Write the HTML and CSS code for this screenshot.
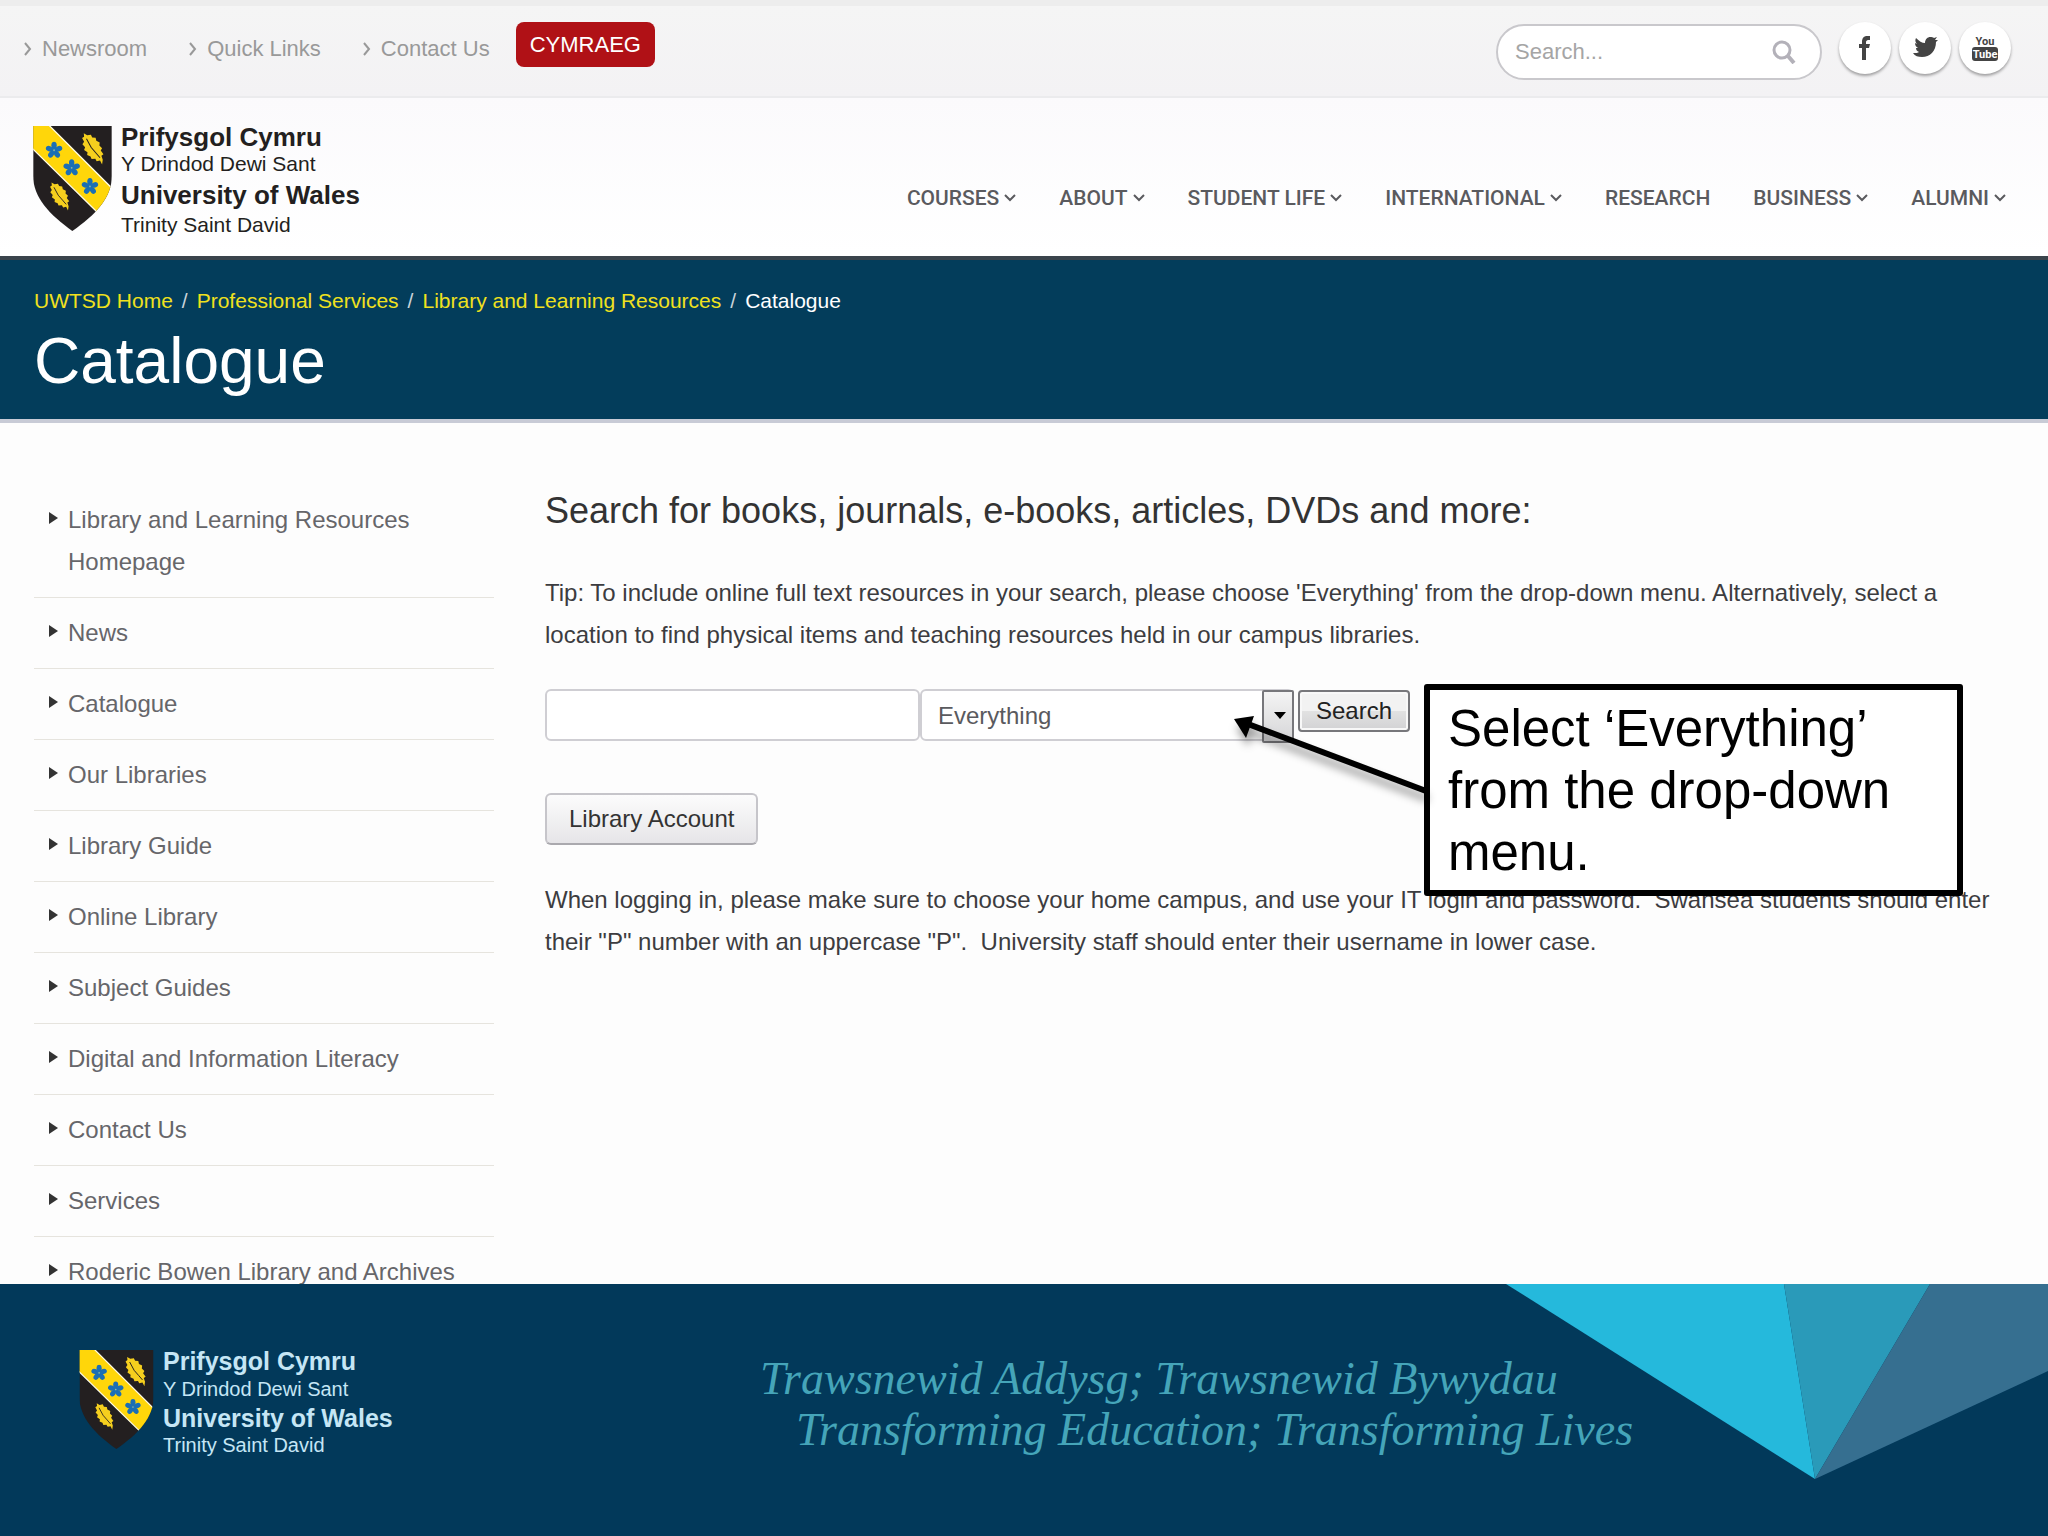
FILE: index.html
```html
<!DOCTYPE html>
<html lang="en">
<head>
    <meta charset="UTF-8">
    <meta name="viewport" content="width=device-width, initial-scale=1.0">
    <title>Catalogue | University of Wales Trinity Saint David</title>
    <link rel="stylesheet" href="styles.css">
</head>
<body>
    <!-- Shared symbols -->
    <svg class="symbols" aria-hidden="true">
        <symbol id="flower" viewBox="-20 -20 40 40">
            <g fill="#1b6fb5">
                <ellipse cx="0" cy="-11" rx="6" ry="8"/>
                <ellipse cx="0" cy="-11" rx="6" ry="8" transform="rotate(72)"/>
                <ellipse cx="0" cy="-11" rx="6" ry="8" transform="rotate(144)"/>
                <ellipse cx="0" cy="-11" rx="6" ry="8" transform="rotate(216)"/>
                <ellipse cx="0" cy="-11" rx="6" ry="8" transform="rotate(288)"/>
                <circle r="6"/>
            </g>
            <circle r="2" fill="#8fb8a0"/>
        </symbol>
        <symbol id="leaf" viewBox="0 0 70 96">
            <path fill="#f5cf1e" d="M6 2L16 8L27 6L31 14L41 15L43 24L53 29L52 38L60 46L56 53L64 64L58 68L62 80L60 94L54 82L44 84L40 77L29 78L26 70L16 66L17 58L7 51L10 43L2 34L7 27L1 16L7 12Z"/>
            <path fill="none" stroke="#231f20" stroke-width="3" d="M14 18L28 44L42 60L54 74"/>
        </symbol>
        <symbol id="shield" viewBox="0 0 237 316">
            <clipPath id="shield-clip">
                <path d="M0 0H237V150C237 215 188 268 118 316C50 268 0 215 0 150Z"/>
            </clipPath>
            <g clip-path="url(#shield-clip)">
                <path fill="#231f20" d="M0 0H237V316H0Z"/>
                <path fill="#ffd60a" stroke="#fffbe0" stroke-width="4" d="M-60 -60L-10 -60L250 200L200 266L-60 11Z"/>
                <use href="#flower" x="36" y="46" width="54" height="54"/>
                <use href="#flower" x="89" y="99" width="54" height="54"/>
                <use href="#flower" x="144" y="155" width="54" height="54"/>
                <use href="#leaf" x="146" y="20" width="72" height="98"/>
                <use href="#leaf" x="44" y="168" width="76" height="88"/>
            </g>
        </symbol>
        <symbol id="chevron-right" viewBox="0 0 8 14">
            <path fill="none" stroke="currentColor" stroke-width="2" d="M1 1L6 7L1 13"/>
        </symbol>
        <symbol id="chevron-down" viewBox="0 0 12 8">
            <path fill="none" stroke="currentColor" stroke-width="2" d="M1 1L6 6L11 1"/>
        </symbol>
    </svg>

    <div class="topbar">
        <ul class="quick-links">
            <li><a href="#"><svg class="icon-right"><use href="#chevron-right"/></svg>Newsroom</a></li>
            <li><a href="#"><svg class="icon-right"><use href="#chevron-right"/></svg>Quick Links</a></li>
            <li><a href="#"><svg class="icon-right"><use href="#chevron-right"/></svg>Contact Us</a></li>
        </ul>
        <a class="language" href="#">CYMRAEG</a>
        <form class="site-search">
            <input type="text" placeholder="Search..." aria-label="Search the site">
            <button type="button" aria-label="Search">
                <svg viewBox="0 0 24 24" width="24" height="24">
                    <circle cx="10" cy="10" r="8" fill="none" stroke="#b3b1b9" stroke-width="3"/>
                    <path stroke="#b3b1b9" stroke-width="4" d="M16 16L22 23"/>
                </svg>
            </button>
        </form>
        <ul class="social">
            <li><a href="#" aria-label="Facebook">
                <svg viewBox="0 0 28 28" width="28" height="28"><path fill="#444" d="M11 26V14H8V10H11V8C11 4 13 2 16 2H19V6H17C16 6 15 7 15 8V10H19L18 14H15V26Z"/></svg>
            </a></li>
            <li><a href="#" aria-label="Twitter">
                <svg viewBox="0 0 28 28" width="28" height="28"><path fill="#444" d="M2 19C5 19 7 19 8 18C6 17 5 16 5 14H7C5 13 4 11 4 9L6 10C4 8 4 6 5 4C8 7 11 9 14 9C14 5 17 3 19 3C21 3 22 3 23 4L26 3L24 6L27 6L25 8C25 17 19 23 11 23C7 23 4 22 2 19Z"/></svg>
            </a></li>
            <li><a href="#" aria-label="YouTube">
                <svg viewBox="0 0 28 28" width="28" height="28">
                    <rect x="1" y="13" width="26" height="14" rx="3" fill="#444"/>
                    <text class="yt" x="14" y="11" fill="#444">You</text>
                    <text class="yt" x="14" y="24" fill="#fff">Tube</text>
                </svg>
            </a></li>
        </ul>
    </div>

    <header>
        <a class="logo" href="#">
            <svg class="crest"><use href="#shield"/></svg>
            <span class="logo-text">
                <strong>Prifysgol Cymru</strong>
                <span>Y Drindod Dewi Sant</span>
                <strong>University of Wales</strong>
                <span>Trinity Saint David</span>
            </span>
        </a>
        <nav>
            <ul>
                <li><a href="#">COURSES<svg class="icon-down"><use href="#chevron-down"/></svg></a></li>
                <li><a href="#">ABOUT<svg class="icon-down"><use href="#chevron-down"/></svg></a></li>
                <li><a href="#">STUDENT LIFE<svg class="icon-down"><use href="#chevron-down"/></svg></a></li>
                <li><a href="#">INTERNATIONAL<svg class="icon-down"><use href="#chevron-down"/></svg></a></li>
                <li><a href="#">RESEARCH</a></li>
                <li><a href="#">BUSINESS<svg class="icon-down"><use href="#chevron-down"/></svg></a></li>
                <li><a href="#">ALUMNI<svg class="icon-down"><use href="#chevron-down"/></svg></a></li>
            </ul>
        </nav>
    </header>

    <div class="banner">
        <ol class="breadcrumb">
            <li><a href="#">UWTSD Home</a></li>
            <li><a href="#">Professional Services</a></li>
            <li><a href="#">Library and Learning Resources</a></li>
            <li>Catalogue</li>
        </ol>
        <h1>Catalogue</h1>
    </div>

    <main>
        <aside>
            <ul class="side-menu">
                <li><a href="#">Library and Learning Resources Homepage</a></li>
                <li><a href="#">News</a></li>
                <li><a href="#">Catalogue</a></li>
                <li><a href="#">Our Libraries</a></li>
                <li><a href="#">Library Guide</a></li>
                <li><a href="#">Online Library</a></li>
                <li><a href="#">Subject Guides</a></li>
                <li><a href="#">Digital and Information Literacy</a></li>
                <li><a href="#">Contact Us</a></li>
                <li><a href="#">Services</a></li>
                <li><a href="#">Roderic Bowen Library and Archives</a></li>
            </ul>
        </aside>
        <section class="content">
            <h2>Search for books, journals, e-books, articles, DVDs and more:</h2>
            <p>Tip: To include online full text resources in your search, please choose 'Everything' from the drop-down menu. Alternatively, select a location to find physical items and teaching resources held in our campus libraries.</p>
            <form class="catalogue-search">
                <input class="query" type="text" aria-label="Search terms">
                <div class="scope">
                    <select aria-label="Search in">
                        <option>Everything</option>
                    </select>
                </div>
                <button class="submit" type="button">Search</button>
                <!-- Help note pointing at the drop-down -->
                <div class="callout">
                    <svg class="pointer" viewBox="0 0 200 90" aria-hidden="true">
                        <path stroke="#000" stroke-width="6" d="M20 17L198 84"/>
                        <path d="M6 12L26 9L18 31Z"/>
                    </svg>
                    Select ‘Everything’ from the drop-down menu.
                </div>
            </form>
            <button class="account" type="button">Library Account</button>
            <p>When logging in, please make sure to choose your home campus, and use your IT login and password.&nbsp; Swansea students should enter their "P" number with an uppercase "P".&nbsp; University staff should enter their username in lower case.</p>
        </section>
    </main>

    <footer>
        <a class="logo" href="#">
            <svg class="crest"><use href="#shield"/></svg>
            <span class="logo-text">
                <strong>Prifysgol Cymru</strong>
                <span>Y Drindod Dewi Sant</span>
                <strong>University of Wales</strong>
                <span>Trinity Saint David</span>
            </span>
        </a>
        <p class="motto">
            <span>Trawsnewid Addysg; Trawsnewid Bywydau</span>
            <span>Transforming Education; Transforming Lives</span>
        </p>
        <svg class="facets" viewBox="0 0 542 196" aria-hidden="true">
            <path fill="#25b9dc" d="M0 0H278L309 195Z"/>
            <path fill="#2a9ab9" d="M278 0H424L309 195Z"/>
            <path fill="#366f90" d="M424 0H542V87L309 195Z"/>
        </svg>
    </footer>
</body>
</html>
```
FILE: styles.css
```css
* {
    box-sizing: border-box;
}
body {
    font-family: "Liberation Sans", Arial, sans-serif;
    font-size: 24px;
    line-height: 42px;
    color: #3c3c40;
    margin: 0;
    height: 100vh;
    display: flex;
    flex-direction: column;
    background-color: #fdfdfd;
}
ul, ol {
    list-style-type: none;
    margin: 0;
    padding: 0;
}
a {
    text-decoration: none;
}
input, select, button {
    font-family: inherit;
    font-size: 24px;
}
.symbols {
    position: absolute;
    width: 0;
    height: 0;
}

/* Top bar */
.topbar {
    display: flex;
    align-items: flex-start;
    padding: 16px 37px 16px 24px;
    border-top: 6px solid #ededed;
    border-bottom: 2px solid #ebebed;
    background: linear-gradient(#f5f5f5, #f3f2f4);
    font-size: 22px;
}
.quick-links {
    display: flex;
    gap: 42px;
    padding-top: 6px;
}
.quick-links a {
    display: flex;
    align-items: center;
    gap: 10px;
    color: #999;
}
.icon-right {
    width: 8px;
    height: 14px;
}
.language {
    margin-left: 26px;
    padding: 0 14px;
    line-height: 45px;
    border-radius: 8px;
    background-color: #b01116;
    color: #fff;
}
.site-search {
    display: flex;
    align-items: center;
    width: 326px;
    height: 56px;
    margin: 2px 17px 0 auto;
    padding: 0 24px 0 17px;
    border: 2px solid #c9c8cc;
    border-radius: 28px;
    background-color: #fff;
}
.site-search input {
    flex: 1;
    min-width: 0;
    padding: 0;
    border: 0;
    outline: 0;
    background: none;
    font-size: 22px;
}
.site-search input::placeholder {
    color: #a5a5a5;
}
.site-search button {
    display: flex;
    padding: 0;
    border: 0;
    background: none;
}
.social {
    display: flex;
    gap: 8px;
}
.social a {
    display: flex;
    align-items: center;
    justify-content: center;
    width: 52px;
    height: 52px;
    border-radius: 50%;
    background-color: #fff;
    box-shadow: 0 2px 3px rgba(0, 0, 0, 0.35);
}
.yt {
    font-family: Roboto, sans-serif;
    font-size: 11px;
    font-weight: bold;
    text-anchor: middle;
}

/* Header */
header {
    display: flex;
    justify-content: space-between;
    align-items: flex-start;
    padding: 24px 42px 19px 33px;
    border-bottom: 4px solid #3a444c;
    background: linear-gradient(#fbfafc, #fff);
}
.logo {
    display: flex;
    gap: 9px;
    color: #231f20;
}
.crest {
    width: 79px;
    height: 105px;
    margin-top: 4px;
}
.logo-text {
    display: grid;
    grid-template-rows: 30px 24px 37px 24px;
    align-items: center;
    font-size: 21px;
    line-height: 24px;
}
.logo-text strong {
    font-size: 26px;
}
nav ul {
    display: flex;
    gap: 43px;
    padding-top: 55px;
}
nav a {
    display: flex;
    align-items: center;
    gap: 5px;
    color: #5a5a5e;
    font-family: Roboto, sans-serif;
    font-size: 21px;
    font-weight: 500;
}
.icon-down {
    width: 12px;
    height: 8px;
}

/* Blue page banner */
.banner {
    padding: 20px 34px 19px;
    border-bottom: 4px solid #c8cbd6;
    background-color: #033d5b;
    color: #fff;
}
.breadcrumb {
    display: flex;
    font-size: 21px;
}
.breadcrumb li + li::before {
    content: "/";
    padding: 0 9px;
    color: #c9d3da;
}
.breadcrumb a {
    color: #f0e11e;
}
h1 {
    margin: 0;
    font-size: 64px;
    font-weight: normal;
    line-height: 78px;
}

/* Main area */
main {
    flex: 1;
    min-height: 0;
    overflow: hidden;
    display: grid;
    grid-template-columns: 460px 1fr;
    gap: 51px;
    padding: 62px 34px 0;
}
.side-menu li {
    display: flex;
    gap: 10px;
    padding: 14px 50px 14px 15px;
    border-bottom: 1px solid #e6e4de;
}
.side-menu li:last-child {
    padding-right: 0;
}
.side-menu li::before {
    content: "";
    flex: none;
    width: 9px;
    height: 12px;
    margin-top: 13px;
    background-color: #333;
    clip-path: polygon(0 0, 100% 50%, 0 100%);
}
.side-menu a {
    color: #66666a;
}
h2 {
    margin: 0 0 36px;
    padding-top: 1px;
    color: #333;
    font-size: 36px;
    font-weight: normal;
    line-height: 50px;
}
.content p {
    margin: 0;
}
.catalogue-search {
    position: relative;
    display: flex;
    align-items: flex-start;
    margin: 33px 0 52px;
}
.query {
    width: 375px;
    height: 52px;
    padding: 0 16px;
    border: 2px solid #cfced3;
    border-radius: 6px;
    background-color: #fff;
}
.scope {
    position: relative;
    width: 374px;
    margin-right: 4px;
}
.scope select {
    width: 100%;
    height: 52px;
    padding: 0 16px;
    border: 2px solid #cfced3;
    border-radius: 6px;
    background-color: #fff;
    color: #5a5a5e;
    appearance: none;
}
/* Drop-down arrow box */
.scope::before {
    content: "";
    position: absolute;
    top: 1px;
    right: 0;
    width: 28px;
    height: 49px;
    border: 2px solid #77777b;
    border-radius: 2px;
    background: linear-gradient(#f4f4f4, #d6d6d8);
    pointer-events: none;
}
.scope::after {
    content: "";
    position: absolute;
    top: 23px;
    right: 8px;
    width: 12px;
    height: 7px;
    background-color: #000;
    clip-path: polygon(0 0, 100% 0, 50% 100%);
    pointer-events: none;
}
.submit {
    height: 42px;
    margin-top: 1px;
    padding: 0 16px;
    border: 2px solid #77777b;
    border-radius: 4px;
    background: linear-gradient(#f2f2f2 50%, #e2e2e2 50%, #d2d2d4);
    box-shadow: inset 0 0 0 2px #f8f8f8;
    color: #222;
}
.account {
    display: block;
    height: 52px;
    margin-bottom: 34px;
    padding: 0 22px;
    border: 2px solid #c6c5ca;
    border-bottom-color: #aaa9ae;
    border-radius: 6px;
    background: linear-gradient(#fcfcfc, #e6e5e8);
    color: #333;
}
.callout {
    position: absolute;
    top: -5px;
    left: 879px;
    width: 539px;
    padding: 8px 50px 6px 18px;
    border: 6px solid #000;
    border-radius: 3px;
    background-color: #fff;
    color: #000;
    font-size: 51px;
    line-height: 62px;
}
.pointer {
    position: absolute;
    top: 17px;
    left: -202px;
    width: 200px;
    height: 90px;
    filter: drop-shadow(2px 8px 4px rgba(0, 0, 0, 0.4));
}

/* Footer */
footer {
    position: relative;
    display: flex;
    align-items: flex-start;
    height: 252px;
    padding: 60px 79px;
    background-color: #02395a;
}
footer .logo {
    width: 681px;
    color: #c5e6f5;
}
footer .crest {
    width: 75px;
    height: 99px;
    margin-top: 6px;
}
footer .logo-text {
    grid-template-rows: 34px 22px 35px 20px;
    font-size: 20px;
}
footer .logo-text strong {
    font-size: 25px;
}
.motto {
    margin: 9px 0 0;
    color: #45a5b9;
    font-family: "Liberation Serif", "Times New Roman", serif;
    font-size: 46px;
    font-style: italic;
    line-height: 51px;
}
.motto span {
    display: block;
}
.motto span + span {
    padding-left: 36px;
}
.facets {
    position: absolute;
    top: 0;
    right: 0;
    width: 542px;
    height: 196px;
}
```
